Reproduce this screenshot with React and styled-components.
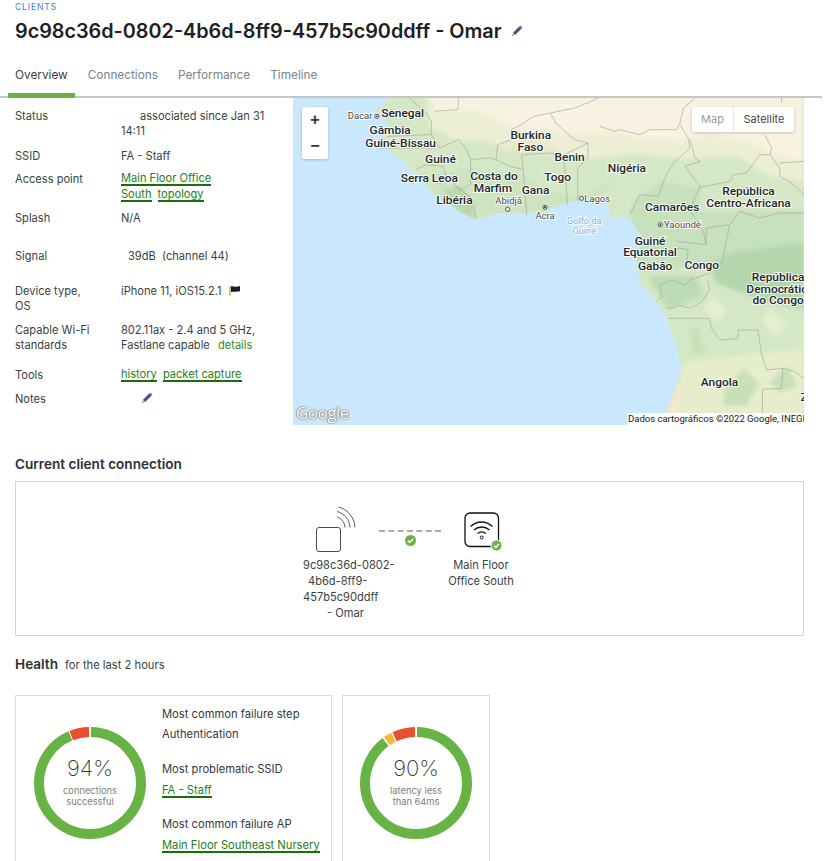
import React from "react";
import styled, { createGlobalStyle } from "styled-components";

const Global = createGlobalStyle`
  html, body { margin: 0; padding: 0; background: #fff; overflow: hidden; height: 861px; }
  body { font-family: Inter, "Liberation Sans", sans-serif; color: #33383c; font-size: 11px; }
`;

const Page = styled.div`
  width: 827px;
  height: 861px;
  overflow: hidden;
`;
const Header = styled.header`
  padding: 2px 0 0 15px;
`;
const Crumb = styled.div`
  font-size: 8.5px;
  line-height: 11px;
  letter-spacing: 0.9px;
  color: #3f78d6;
`;
const TitleRow = styled.div`
  display: flex;
  align-items: center;
  gap: 9px;
  margin-top: 6px;
  height: 24px;
`;
const Title = styled.h1`
  margin: 0;
  font-size: 19.8px;
  line-height: 24px;
  font-weight: 600;
  color: #1d2124;
`;
const Tabs = styled.nav`
  display: flex;
  height: 53px;
  width: 822px;
  border-bottom: 2px solid #c6c6c6;
  box-sizing: border-box;
  margin-top: 2px;
  padding-left: 8px;
`;
const Tab = styled.div`
  box-sizing: border-box;
  height: 53px;
  padding: 22px 7px 0;
  margin-right: ${(p) => p.$gap}px;
  font-size: 11.8px;
  line-height: 16px;
  color: ${(p) => (p.$active ? "#3a4044" : "#77848a")};
  border-bottom: ${(p) => (p.$active ? "5px solid #67b346" : "none")};
`;
const Top = styled.section`
  display: flex;
  height: 327px;
`;
const Info = styled.div`
  width: 293px;
  box-sizing: border-box;
  padding: 11px 0 0 15px;
`;
const Row = styled.div`
  display: grid;
  grid-template-columns: 106px 1fr;
  height: ${(p) => p.$h}px;
  line-height: 15px;
  font-size: 11.1px;
  color: #3a3f43;
`;
const Value = styled.div`
  width: 150px;
  line-height: ${(p) => p.$lh || 15}px;
  margin-top: ${(p) => p.$mt || 0}px;
`;
const Indent = styled.span`
  display: inline-block;
  width: ${(p) => p.$w}px;
`;
const Link = styled.a`
  color: #267d17;
  text-decoration: none;
  border-bottom: 2px solid #17700a;
  line-height: 12px;
  display: inline-block;
  margin-right: ${(p) => p.$gap || 0}px;
`;
const PlainLink = styled.span`
  color: #2f8a2a;
  margin-left: 5px;
`;
const MapBox = styled.div`
  position: relative;
  width: 511px;
  height: 327px;
  overflow: hidden;
  background: #c9e7fd;
`;
const MapSvg = styled.svg`
  display: block;
  width: 511px;
  height: 327px;
`;
const Label = styled.text`
  font-family: Roboto, sans-serif;
  font-size: ${(p) => p.$size || 35}px;
  font-weight: ${(p) => p.$weight || 500};
  fill: ${(p) => p.$fill || "#23262a"};
  stroke: #fff;
  stroke-width: 6px;
  stroke-opacity: 0.85;
  paint-order: stroke;
  text-anchor: ${(p) => p.$anchor || "middle"};
`;
const Zoom = styled.div`
  position: absolute;
  left: 9px;
  top: 9px;
  width: 26px;
  height: 52px;
  background: #fff;
  border-radius: 2px;
  box-shadow: 0 1px 3px rgba(0, 0, 0, 0.2);
  display: flex;
  flex-direction: column;
`;
const ZoomBtn = styled.div`
  flex: 1;
  text-align: center;
  font: 700 16px/26px "Liberation Sans", sans-serif;
  color: #333;
`;
const MapType = styled.div`
  position: absolute;
  left: 399px;
  top: 9px;
  height: 25px;
  display: flex;
  background: #fff;
  border-radius: 2px;
  box-shadow: 0 1px 3px rgba(0, 0, 0, 0.2);
  font-size: 11px;
  line-height: 25px;
`;
const MapTypeBtn = styled.div`
  width: ${(p) => p.$w}px;
  text-align: center;
  color: ${(p) => (p.$on ? "#444" : "#9a9a9a")};
  border-left: ${(p) => (p.$on ? "1px solid #e8e8e8" : "none")};
`;
const Attribution = styled.div`
  position: absolute;
  right: 0;
  bottom: 0;
  width: 177px;
  height: 12px;
  background: rgba(255, 255, 255, 0.9);
  font: 400 9.5px/12px Roboto, sans-serif;
  color: #222;
  white-space: nowrap;
  padding-left: 1px;
  box-sizing: border-box;
  overflow: hidden;
`;
const GoogleMark = styled.div`
  position: absolute;
  left: 3px;
  bottom: 2px;
  font: 500 17px/20px "Open Sans", sans-serif;
  color: #fff;
  letter-spacing: -0.5px;
  text-shadow: 0 0 1px #666, 0 0 1px #666, 0 0 2px #888;
`;
const Heading = styled.h2`
  margin: 0;
  font-size: 13.6px;
  line-height: 16px;
  font-weight: 600;
  color: #2b3035;
`;
const Connection = styled.section`
  padding: 31px 0 0 15px;
`;
const ConnectionBox = styled.div`
  box-sizing: border-box;
  margin-top: 9px;
  width: 789px;
  height: 155px;
  border: 1px solid #d5d5d5;
  padding: 25px 0 0 287px;
  display: grid;
  grid-template-columns: 76px 62px 70px;
  grid-template-rows: 46px auto;
`;
const IconCell = styled.div`
  padding-left: 5px;
`;
const LinkCell = styled.div`
  width: 62px;
  padding-top: 23px;
  display: flex;
  flex-direction: column;
  align-items: center;
`;
const ApCell = styled.div`
  margin-left: 7px;
  width: 70px;
  display: flex;
  flex-direction: column;
  align-items: center;
  padding-top: 5px;
`;
const NodeText = styled.div`
  grid-row: 2;
  grid-column: ${(p) => p.$col};
  font-size: 11.1px;
  line-height: 16px;
  color: #3a3f43;
  margin-top: 4px;
  margin-left: ${(p) => p.$left || 0}px;
  width: ${(p) => p.$w}px;
  text-align: ${(p) => p.$align || "center"};
`;
const NodeLine = styled.span`
  display: block;
  white-space: nowrap;
  margin-left: ${(p) => p.$left || 0}px;
`;
const Dash = styled.div`
  width: 62px;
  border-top: 2px dashed #aaa;
  margin-bottom: 3px;
`;
const Health = styled.section`
  padding: 20px 0 0 15px;
`;
const HealthHead = styled.div`
  display: flex;
  align-items: baseline;
  gap: 7px;
`;
const Sub = styled.span`
  font-size: 11.2px;
  color: #3a3f43;
`;
const Cards = styled.div`
  display: flex;
  gap: 10px;
  margin-top: 23px;
`;
const Card = styled.div`
  box-sizing: border-box;
  width: ${(p) => p.$w}px;
  height: 190px;
  border: 1px solid #dcdcdc;
  padding-left: ${(p) => p.$pad}px;
  display: flex;
`;
const DonutWrap = styled.div`
  position: relative;
  width: 114px;
  height: 114px;
  margin-top: 30px;
  flex: none;
`;
const DonutText = styled.div`
  position: absolute;
  inset: 0;
  text-align: center;
  padding-top: 28px;
  box-sizing: border-box;
`;
const Percent = styled.div`
  font-size: 22px;
  line-height: 28px;
  font-weight: 200;
  color: #2f3438;
`;
const Caption = styled.div`
  font-size: 9.3px;
  line-height: 11px;
  color: #7d7d7d;
  margin-top: 3px;
`;
const Facts = styled.div`
  margin-left: 15px;
  padding-top: 10px;
  font-size: 11.2px;
  white-space: nowrap;
`;
const Fact = styled.div`
  line-height: 16px;
  height: ${(p) => p.$h}px;
  color: #33383c;
`;

const Pencil = () => (
  <svg width="12" height="12" viewBox="0 0 12 12">
    <path d="M8.2 1.6l2.2 2.2-6.2 6.2-2.2-2.2z" fill="#3d5488" />
    <path d="M8.9.9l.7-.4 1.9 1.9-.4.7-.7.7-2.2-2.2z" fill="#8a6f80" />
    <path d="M2 7.8l2.2 2.2-3 .8z" fill="#d99a5b" />
    <path d="M1.3 10.1l.7.7-1 .2z" fill="#222" />
  </svg>
);

const Flag = () => (
  <svg width="12" height="11" viewBox="0 0 12 11" style={{ marginLeft: 8, verticalAlign: -1 }}>
    <path d="M1 1v9.5" stroke="#c98a2b" strokeWidth="1.2" />
    <path d="M2 1.5c2-.8 3 .6 5 .2s3-.4 4-.4v5c-1.5 0-2.5.2-4 .5s-3-.6-5 .1z" fill="#141d2b" />
  </svg>
);

const Check = ({ size = 11 }) => (
  <svg width={size} height={size} viewBox="0 0 12 12">
    <circle cx="6" cy="6" r="6" fill="#67b346" />
    <path d="M3.2 6.1l2 2 3.6-3.8" fill="none" stroke="#fff" strokeWidth="1.7" />
  </svg>
);

const ClientIcon = () => (
  <svg width="50" height="46" viewBox="0 0 50 46" style={{ display: "block" }}>
    <rect x="8.5" y="20.5" width="24" height="24" rx="2.5" fill="#fff" stroke="#4a4a4a" />
    <g fill="none" stroke="#444" strokeWidth="0.9">
      <path d="M29 10c4.5 1.5 7.5 5 8 10.5" />
      <path d="M29 4.5c7.5 2 12.500 8 13 16" />
      <path d="M29-.5c10.5 2.5 17.5 10.5 18 21" />
    </g>
  </svg>
);

const ApIcon = () => (
  <svg width="38" height="39" viewBox="0 0 38 39" style={{ display: "block" }}>
    <rect x="1" y="1" width="33.5" height="33.5" rx="5" fill="#fff" stroke="#111" strokeWidth="1.3" />
    <g fill="none" stroke="#111" strokeWidth="1.3">
      <path d="M6.5 14.5c6.5-6 15.5-6 22 0" />
      <path d="M10 18c4.5-4 11-4 15.5 0" />
      <path d="M13.5 21.5c2.5-2 6-2 8.5 0" />
    </g>
    <circle cx="17.7" cy="25.5" r="1.5" fill="none" stroke="#111" />
    <circle cx="32.5" cy="33.5" r="5.5" fill="#67b346" stroke="#fff" />
    <path d="M30 33.5l1.8 1.8 3.2-3.4" fill="none" stroke="#fff" strokeWidth="1.5" />
  </svg>
);

const Donut = ({ segments, value, caption }) => (
  <DonutWrap>
    <svg width="114" height="114" viewBox="0 0 114 114">
      <g transform="rotate(-90 57 57)">
        {segments.map((s, i) => (
          <circle
            key={i}
            cx="57"
            cy="57"
            r="51"
            fill="none"
            stroke={s.color}
            strokeWidth="10"
            pathLength="100"
            strokeDasharray={`${s.len} ${100 - s.len}`}
            strokeDashoffset={-s.start}
          />
        ))}
      </g>
    </svg>
    <DonutText>
      <Percent>{value}</Percent>
      <Caption>
        {caption[0]}
        <br />
        {caption[1]}
      </Caption>
    </DonutText>
  </DonutWrap>
);

const labels = [
  ["Senegal", 322, 64],
  ["Gâmbia", 285, 114],
  ["Guiné-Bissau", 316, 153],
  ["Burkina", 698, 130],
  ["Faso", 697, 164],
  ["Guiné", 433, 202],
  ["Benin", 812, 196],
  ["Nigéria", 980, 228],
  ["Serra Leoa", 400, 257],
  ["Costa do", 590, 253],
  ["Marfim", 587, 288],
  ["Togo", 777, 255],
  ["Gana", 712, 293],
  ["Libéria", 474, 324],
  ["República", 1337, 298],
  ["Centro-Africana", 1337, 334],
  ["Camarões", 1113, 345],
  ["Guiné", 1048, 447],
  ["Equatorial", 1048, 481],
  ["Gabão", 1063, 522],
  ["Congo", 1200, 520],
  ["República", 1424, 555],
  ["Democrática", 1430, 591],
  ["do Congo", 1424, 625],
  ["Angola", 1252, 870],
];

const towns = [
  ["Dacar", 197, 70],
  ["Abidjã", 633, 325],
  ["Acra", 740, 369],
  ["Lagos", 893, 317],
  ["Yaoundé", 1143, 395],
];

const LAND =
  "M276,0 L278,20 L241,41 L285,91 L262,125 L275,156 L336,206 L376,256 L426,306 L486,346 L536,371 L606,351 L676,351 L726,351 L786,326 L836,311 L926,326 L930,361 L989,366 L1009,401 L1033,426 L1008,480 L1018,562 L1067,617 L1091,657 L1121,732 L1140,812 L1121,877 L1101,932 L1091,957 L1085,987 L1500,987 L1500,0 Z";

// soft colour areas, blurred and clipped to the land
const areas = [
  ["#ecefd3", "M395,0 L400,90 L470,130 L560,135 L640,165 L780,175 L870,190 L1000,170 L1150,190 L1300,180 L1400,240 L1500,260 L1500,0 Z"],
  ["#f7f2e1", "M402,6 L422,46 L549,46 L647,96 L754,106 L852,116 L930,106 L1018,126 L1145,136 L1224,116 L1361,146 L1410,176 L1500,196 L1500,0 L402,0 Z"],
  ["#e9e6c6", "M625,140 L700,130 L770,155 L780,170 L640,165 Z"],
  ["#cde4bf", "M376,240 L526,216 L676,236 L756,286 L846,306 L946,246 L880,340 L530,372 L420,310 Z"],
  ["#c6e1bc", "M991,356 L1000,316 L1076,256 L1200,276 L1190,346 L1500,346 L1500,480 L1230,500 L1008,530 Z"],
  ["#b3d6ad", "M1220,500 L1290,470 L1500,440 L1500,640 L1400,620 L1290,580 L1240,560 Z"],
  ["#bcdcb6", "M1040,540 L1180,540 L1210,600 L1100,640 Z"],
  ["#bad8ac", "M440,280 L490,275 L530,320 L530,372 L480,345 Z"],
  ["#e6edcb", "M1150,800 L1300,780 L1500,760 L1500,987 L1080,987 L1130,860 Z"],
  ["#f5e7cc", "M1125,870 L1140,880 L1120,950 L1110,987 L1085,987 Z"],
  ["#c6e0b9", "M1160,700 L1190,690 L1210,770 L1180,780 Z"],
  ["#c6e0b9", "M1270,880 L1320,820 L1370,860 L1330,930 L1260,930 Z"],
  ["#c6e0b9", "M1400,860 L1450,810 L1480,870 L1430,890 Z"],
  ["#e6eed2", "M1230,600 L1270,640 L1250,680 L1210,640 Z"],
  ["#e6eed2", "M1400,640 L1450,690 L1410,720 L1380,670 Z"],
];

const borders = [
  "M341,6 L386,46 L406,76 L406,116 L431,156 L486,131 L506,156 L521,191 L576,186 L596,191 L601,146 L641,131 L641,101 L671,86 L706,61 L756,51 L771,81 L826,131 L866,141 L866,186 L836,216",
  "M486,6 L484,41 L416,46 M756,51 L826,36 L876,16 L895,6",
  "M276,121 L406,116 M256,156 L416,156",
  "M361,221 L391,206 L441,211 L451,246 M456,241 L481,276 L526,306 L536,366",
  "M521,191 L521,266 L496,281 L481,271",
  "M596,191 L636,211 L676,221 L671,176 L761,171 L776,186 L866,141",
  "M676,221 L686,356 M761,171 L796,196 L806,326 M836,216 L836,316",
  "M901,91 L945,106 L960,101 L1018,116 L1048,101 L1126,101 L1136,81 L1146,36 L1180,6",
  "M1136,86 L1160,126 L1165,156 L1150,171 L1116,201 L1092,246 L1072,301 L1018,296 L989,356",
  "M1165,126 L1180,186 L1195,196 L1150,211 L1195,271 L1175,316 L1170,351 L1205,406 L1212,446",
  "M1195,274 L1282,256 L1292,236 L1331,231 L1370,176 L1400,176 L1429,216 L1429,241 L1463,261 L1500,296",
  "M1400,176 L1405,156 L1385,116 M1434,6 L1434,21 M1429,201 L1500,196",
  "M1500,351 L1429,351 L1370,366 L1312,346 L1282,386 L1214,396 L1212,446",
  "M1282,386 L1258,506",
  "M1126,436 L1212,446 M1126,456 L1160,461 L1155,511",
  "M1077,567 L1111,552 L1150,567 L1165,552 L1220,532 M1077,567 L1082,602 L1067,617",
  "M1096,632 L1111,637 L1135,627 L1165,637 L1199,617 L1223,582 L1218,552",
  "M1101,667 L1223,667 L1228,697 L1253,732 L1306,727 L1308,702 L1365,702 L1375,772 L1390,822 L1438,817 L1473,827 L1500,847",
  "M1438,817 L1434,877 L1378,880 L1378,987",
];

const App = () => (
  <Page>
    <Global />
    <Header>
      <Crumb>CLIENTS</Crumb>
      <TitleRow>
        <Title>9c98c36d-0802-4b6d-8ff9-457b5c90ddff - Omar</Title>
        <Pencil />
      </TitleRow>
    </Header>
    <Tabs>
      <Tab $active $gap={6}>Overview</Tab>
      <Tab $gap={6}>Connections</Tab>
      <Tab $gap={6}>Performance</Tab>
      <Tab>Timeline</Tab>
    </Tabs>
    <Top>
      <Info>
        <Row $h={40}>
          <div>Status</div>
          <Value>
            <Indent $w={19} />
            associated since Jan 31 14:11
          </Value>
        </Row>
        <Row $h={23}>
          <div>SSID</div>
          <Value>FA - Staff</Value>
        </Row>
        <Row $h={39}>
          <div>Access point</div>
          <Value $lh={16} $mt={-2}>
            <Link>Main Floor Office</Link>
            <br />
            <Link $gap={6}>South</Link>
            <Link>topology</Link>
          </Value>
        </Row>
        <Row $h={38}>
          <div>Splash</div>
          <Value>N/A</Value>
        </Row>
        <Row $h={35}>
          <div>Signal</div>
          <Value>
            <Indent $w={7} />
            39dB&nbsp; (channel 44)
          </Value>
        </Row>
        <Row $h={39}>
          <div>
            Device type,
            <br />
            OS
          </div>
          <Value>
            iPhone 11, iOS15.2.1
            <Flag />
          </Value>
        </Row>
        <Row $h={45}>
          <div>
            Capable Wi-Fi
            <br />
            standards
          </div>
          <Value>
            802.11ax - 2.4 and 5 GHz, Fastlane capable <PlainLink>details</PlainLink>
          </Value>
        </Row>
        <Row $h={24}>
          <div>Tools</div>
          <Value $mt={-1}>
            <Link $gap={6}>history</Link>
            <Link>packet capture</Link>
          </Value>
        </Row>
        <Row $h={20}>
          <div>Notes</div>
          <Value>
            <Indent $w={20} />
            <Pencil />
          </Value>
        </Row>
      </Info>
      <MapBox>
        <MapSvg viewBox="0 6 1500 981" preserveAspectRatio="none">
          <defs>
            <clipPath id="land">
              <path d={LAND} />
            </clipPath>
            <filter id="soft" x="-20%" y="-20%" width="140%" height="140%">
              <feGaussianBlur stdDeviation="7" />
            </filter>
          </defs>
          <rect x="0" y="0" width="1500" height="990" fill="#c9e7fd" />
          <path d={LAND} fill="#d5e8c6" />
          <g clipPath="url(#land)">
            <g filter="url(#soft)">
              {areas.map(([fill, d], i) => (
                <path key={i} d={d} fill={fill} />
              ))}
            </g>
          </g>
          <g fill="none" stroke="#9ea39b" strokeWidth="1.8">
            {borders.map((d, i) => (
              <path key={i} d={d} />
            ))}
          </g>
          {labels.map(([name, x, y], i) => (
            <Label key={i} x={x} y={y}>
              {name}
            </Label>
          ))}
          {towns.map(([name, x, y], i) => (
            <Label key={i} x={x} y={y} $size={28} $weight={400} $fill="#4c4c4c">
              {name}
            </Label>
          ))}
          <Label x={855} y={385} $size={27} $weight={400} $fill="#86aedc">Golfo da</Label>
          <Label x={855} y={413} $size={27} $weight={400} $fill="#86aedc">Guiné</Label>
          <Label x={1490} y={915} $anchor="start">Zâmbia</Label>
          <g fill="#fff" stroke="#333" strokeWidth="2.5">
            <circle cx="246" cy="61" r="6" />
            <circle cx="847" cy="307" r="6" />
            <circle cx="630" cy="340" r="6" />
            <circle cx="740" cy="334" r="6" />
            <circle cx="1078" cy="386" r="6" />
          </g>
          <g fill="#333">
            <circle cx="246" cy="61" r="2.5" />
            <circle cx="740" cy="334" r="3" />
            <circle cx="1078" cy="386" r="2.5" />
          </g>
        </MapSvg>
        <Zoom>
          <ZoomBtn>+</ZoomBtn>
          <ZoomBtn>−</ZoomBtn>
        </Zoom>
        <MapType>
          <MapTypeBtn $w={41}>Map</MapTypeBtn>
          <MapTypeBtn $on $w={60}>Satellite</MapTypeBtn>
        </MapType>
        <GoogleMark>Google</GoogleMark>
        <Attribution>Dados cartográficos ©2022 Google, INEGI</Attribution>
      </MapBox>
    </Top>
    <Connection>
      <Heading>Current client connection</Heading>
      <ConnectionBox>
        <IconCell>
          <ClientIcon />
        </IconCell>
        <LinkCell>
          <Dash />
          <Check />
        </LinkCell>
        <ApCell>
          <ApIcon />
        </ApCell>
        <NodeText $col={1} $w={76} $align="left">
          <NodeLine>9c98c36d-0802-</NodeLine>
          <NodeLine $left={5}>4b6d-8ff9-</NodeLine>
          <NodeLine>457b5c90ddff</NodeLine>
          <NodeLine $left={24}>- Omar</NodeLine>
        </NodeText>
        <NodeText $col={3} $w={70} $left={5}>
          Main Floor Office South
        </NodeText>
      </ConnectionBox>
    </Connection>
    <Health>
      <HealthHead>
        <Heading>Health</Heading>
        <Sub>for the last 2 hours</Sub>
      </HealthHead>
      <Cards>
        <Card $w={317} $pad={17}>
          <Donut
            value="94%"
            caption={["connections", "successful"]}
            segments={[
              { color: "#67b346", start: 0.3, len: 93.4 },
              { color: "#e8502f", start: 94, len: 5.7 },
            ]}
          />
          <Facts>
            <Fact $h={20}>Most common failure step</Fact>
            <Fact $h={35}>Authentication</Fact>
            <Fact $h={21}>Most problematic SSID</Fact>
            <Fact $h={34}><Link>FA - Staff</Link></Fact>
            <Fact $h={21}>Most common failure AP</Fact>
            <Fact $h={20}><Link>Main Floor Southeast Nursery</Link></Fact>
          </Facts>
        </Card>
        <Card $w={148} $pad={16}>
          <Donut
            value="90%"
            caption={["latency less", "than 64ms"]}
            segments={[
              { color: "#67b346", start: 0.3, len: 89.5 },
              { color: "#f6b73c", start: 90.3, len: 2.4 },
              { color: "#e8502f", start: 93.1, len: 6.6 },
            ]}
          />
        </Card>
      </Cards>
    </Health>
  </Page>
);

export default App;
